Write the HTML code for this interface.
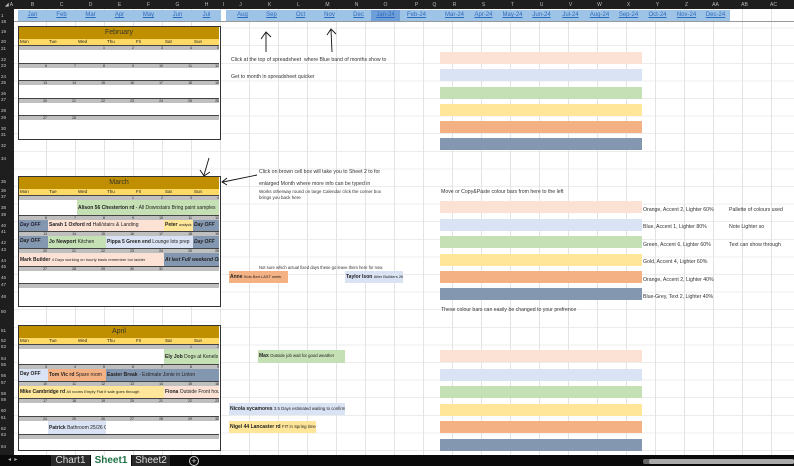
<!DOCTYPE html><html><head><meta charset="utf-8"><style>
*{margin:0;padding:0;box-sizing:border-box}
body{width:794px;height:466px;overflow:hidden;background:#fff;position:relative;font-family:"Liberation Sans",sans-serif;font-size:5px;color:#222}
.a{position:absolute;white-space:nowrap;overflow:hidden}
#grid{position:absolute;left:14px;top:9px;width:780px;height:446px;
background-image:repeating-linear-gradient(90deg,transparent 0 28px,#e3e3e3 28px 29px),repeating-linear-gradient(180deg,transparent 0 16.6px,#ececec 16.6px 17.6px);background-position:4px 0,0 2px}
.hdr{position:absolute;left:0;top:0;width:794px;height:9px;background:#1e1e1e;color:#bbb;font-size:5px}
.hdr span{position:absolute;top:2px;width:29px;text-align:center}
.rh{position:absolute;left:0;top:9px;width:14px;height:446px;background:#1e1e1e;color:#ccc;font-size:4.5px}
.rh span{position:absolute;left:1px}
.mon{position:absolute;top:10px;height:11px;background:#9dc3e6;color:#2f6bbd;font-size:6px;text-decoration:underline;text-align:center;line-height:11px}
.box{position:absolute;left:18px;width:203px;border:1.5px solid #333;background:#fff}
.t{position:absolute;left:0;width:200px;background:#bf8f00;color:#333;font-size:7px;text-align:center}
.w{position:absolute;left:0;width:200px;height:6px;background:#ffd966;font-size:4.5px}
.w span{position:absolute;width:29px;padding-left:1px}
.g{position:absolute;left:0;width:200px;height:5px;background:#bfbfbf;font-size:3.5px;border-top:1px solid #444}
.g span{position:absolute;width:28px;text-align:right}
.e{position:absolute;font-size:5px;line-height:1.2;padding:2px 1px;white-space:nowrap;overflow:hidden}
.e b{font-weight:bold}
.bar{position:absolute;left:440px;width:202px;height:12px}
.o{background:#fbe2d5}.bl{background:#dae3f3}.gr{background:#c5e0b4}.go{background:#ffe699}.o4{background:#f4b183}.bg{background:#8497b0}
.note{position:absolute;font-size:5.2px;color:#333;white-space:nowrap}
</style></head><body>
<div id="grid"></div>
<div class="hdr">
<span style="left:2px;width:14px">◢ A</span><span style="left:18px">B</span><span style="left:47px">C</span><span style="left:76px">D</span><span style="left:105px">E</span><span style="left:134px">F</span><span style="left:163px">G</span><span style="left:192px">H</span><span style="left:219px;width:9px">I</span><span style="left:226px">J</span><span style="left:255px">K</span><span style="left:284px">L</span><span style="left:313px">M</span><span style="left:342px">N</span><span style="left:371px">O</span><span style="left:402px">P</span><span style="left:430px;width:9px">Q</span><span style="left:440px">R</span><span style="left:469px">S</span><span style="left:498px">T</span><span style="left:527px">U</span><span style="left:556px">V</span><span style="left:585px">W</span><span style="left:614px">X</span><span style="left:643px">Y</span><span style="left:672px">Z</span><span style="left:701px">AA</span><span style="left:730px">AB</span><span style="left:759px">AC</span>
</div>
<div class="rh">
<span style="top:4px">1</span><span style="top:10px">18</span><span style="top:20px">19</span><span style="top:30px">20</span><span style="top:37px">21</span><span style="top:48px">22</span><span style="top:54px">23</span><span style="top:65px">24</span><span style="top:71px">25</span><span style="top:82px">26</span><span style="top:88px">27</span><span style="top:99px">28</span><span style="top:106px">29</span><span style="top:117px">30</span><span style="top:123px">31</span><span style="top:134px">32</span><span style="top:147px">34</span><span style="top:170px">35</span><span style="top:179px">36</span><span style="top:185px">37</span><span style="top:196px">38</span><span style="top:203px">39</span><span style="top:214px">40</span><span style="top:220px">41</span><span style="top:231px">42</span><span style="top:238px">43</span><span style="top:249px">44</span><span style="top:255px">45</span><span style="top:266px">46</span><span style="top:273px">47</span><span style="top:285px">48</span><span style="top:300px">50</span><span style="top:319px">51</span><span style="top:329px">52</span><span style="top:335px">53</span><span style="top:347px">54</span><span style="top:353px">55</span><span style="top:364px">56</span><span style="top:371px">57</span><span style="top:382px">58</span><span style="top:388px">59</span><span style="top:399px">60</span><span style="top:406px">61</span><span style="top:417px">62</span><span style="top:423px">63</span><span style="top:435px">64</span>
</div>
<div class="mon" style="left:18px;width:203px;background:#9dc3e6"></div>
<div class="mon" style="left:18px;width:29px">Jan</div><div class="mon" style="left:47px;width:29px">Feb</div><div class="mon" style="left:76px;width:29px">Mar</div><div class="mon" style="left:105px;width:29px">Apr</div><div class="mon" style="left:134px;width:29px">May</div><div class="mon" style="left:163px;width:29px">Jun</div><div class="mon" style="left:192px;width:29px">Jul</div>
<div class="mon" style="left:226px;width:174px"></div>
<div class="mon" style="left:228px;width:29px">Aug</div><div class="mon" style="left:257px;width:29px">Sep</div><div class="mon" style="left:286px;width:29px">Oct</div><div class="mon" style="left:315px;width:29px">Nov</div><div class="mon" style="left:344px;width:29px">Dec</div><div class="mon" style="left:371px;width:29px;background:#6f9fd8">Jan-24</div>
<div class="mon" style="left:400px;width:328px"></div>
<div class="mon" style="left:402px;width:29px">Feb-24</div><div class="mon" style="left:440px;width:29px">Mar-24</div><div class="mon" style="left:469px;width:29px">Apr-24</div><div class="mon" style="left:498px;width:29px">May-24</div><div class="mon" style="left:527px;width:29px">Jun-24</div><div class="mon" style="left:556px;width:29px">Jul-24</div><div class="mon" style="left:585px;width:29px">Aug-24</div><div class="mon" style="left:614px;width:29px">Sep-24</div><div class="mon" style="left:643px;width:29px">Oct-24</div><div class="mon" style="left:672px;width:29px">Nov-24</div><div class="mon" style="left:701px;width:29px">Dec-24</div>
<div class="a" style="left:14px;top:21px;width:780px;height:1px;background:#999"></div>

<!-- February -->
<div class="box" style="top:26px;height:114px">
<div class="t" style="top:0;height:12px;line-height:12px">February</div>
<div class="w" style="top:12px"><span style="left:0">Mon</span><span style="left:29px">Tue</span><span style="left:58px">Wed</span><span style="left:87px">Thu</span><span style="left:116px">Fri</span><span style="left:145px">Sat</span><span style="left:174px">Sun</span></div>
<div class="g" style="top:18px"><span style="left:58px">1</span><span style="left:87px">2</span><span style="left:116px">3</span><span style="left:145px">4</span><span style="left:172px">5</span></div>
<div class="g" style="top:36px"><span style="left:0">6</span><span style="left:29px">7</span><span style="left:58px">8</span><span style="left:87px">9</span><span style="left:116px">10</span><span style="left:145px">11</span><span style="left:172px">12</span></div>
<div class="g" style="top:53px"><span style="left:0">13</span><span style="left:29px">14</span><span style="left:58px">15</span><span style="left:87px">16</span><span style="left:116px">17</span><span style="left:145px">18</span><span style="left:172px">19</span></div>
<div class="g" style="top:71px"><span style="left:0">20</span><span style="left:29px">21</span><span style="left:58px">22</span><span style="left:87px">23</span><span style="left:116px">24</span><span style="left:145px">25</span><span style="left:172px">26</span></div>
<div class="g" style="top:88px"><span style="left:0">27</span><span style="left:29px">28</span></div>
</div>

<!-- March -->
<div class="box" style="top:176px;height:131px">
<div class="t" style="top:0;height:12px;line-height:12px">March</div>
<div class="w" style="top:12px"><span style="left:0">Mon</span><span style="left:29px">Tue</span><span style="left:58px">Wed</span><span style="left:87px">Thu</span><span style="left:116px">Fri</span><span style="left:145px">Sat</span><span style="left:174px">Sun</span></div>
<div class="g" style="top:18px"><span style="left:87px">1</span><span style="left:116px">2</span><span style="left:145px">3</span><span style="left:172px">4</span></div>
<div class="e gr" style="left:58px;top:23px;width:142px;height:15px;padding-top:5px"><b>Alison 56 Chesterton rd</b> - All Downstairs Bring paint samples</div>
<div class="g" style="top:38px"><span style="left:0">6</span><span style="left:29px">7</span><span style="left:58px">8</span><span style="left:87px">9</span><span style="left:116px">10</span><span style="left:145px">11</span><span style="left:172px">12</span></div>
<div class="e bg" style="left:0;top:43px;width:29px;height:11px;color:#223"><b><i>Day OFF</i></b></div>
<div class="e o" style="left:29px;top:43px;width:116px;height:11px"><b>Sarah 1 Oxford rd</b> Hall/stairs &amp; Landing</div>
<div class="e go" style="left:145px;top:43px;width:29px;height:11px"><b>Peter</b> <span style="font-size:3.5px">analysis</span></div>
<div class="e bg" style="left:174px;top:43px;width:26px;height:11px"><b><i>Day OFF</i></b></div>
<div class="g" style="top:54px"><span style="left:0">13</span><span style="left:29px">14</span><span style="left:58px">15</span><span style="left:87px">16</span><span style="left:116px">17</span><span style="left:145px">18</span><span style="left:172px">19</span></div>
<div class="e bg" style="left:0;top:59px;width:29px;height:12px"><b><i>Day OFF</i></b></div>
<div class="e gr" style="left:29px;top:59px;width:58px;height:12px;padding-top:3px"><b>Jo Newport</b> Kitchen</div>
<div class="e bl" style="left:87px;top:59px;width:87px;height:12px;padding-top:3px"><b>Pippa 5 Green end</b> Lounge lots prep</div>
<div class="e bg" style="left:174px;top:59px;width:26px;height:12px;padding-top:3px"><b><i>Day OFF</i></b></div>
<div class="g" style="top:71px"><span style="left:0">20</span><span style="left:29px">21</span><span style="left:58px">22</span><span style="left:87px">23</span><span style="left:116px">24</span><span style="left:145px">25</span><span style="left:172px">26</span></div>
<div class="e o" style="left:0;top:76px;width:145px;height:13px;padding-top:4px"><b>Mark Builder</b> <span style="font-size:4px">4 Days working on hourly basis remember Ion ladder</span></div>
<div class="e bg" style="left:145px;top:76px;width:55px;height:13px;padding-top:4px"><b><i>At last Full weekend OFF</i></b></div>
<div class="g" style="top:89px"><span style="left:0">27</span><span style="left:29px">28</span><span style="left:58px">29</span><span style="left:87px">30</span><span style="left:116px">31</span></div>
<div class="g" style="top:106px"></div>
</div>

<!-- April -->
<div class="box" style="top:325px;height:126px">
<div class="t" style="top:0;height:12px;line-height:12px">April</div>
<div class="w" style="top:12px"><span style="left:0">Mon</span><span style="left:29px">Tue</span><span style="left:58px">Wed</span><span style="left:87px">Thu</span><span style="left:116px">Fri</span><span style="left:145px">Sat</span><span style="left:174px">Sun</span></div>
<div class="g" style="top:18px"><span style="left:145px">1</span><span style="left:172px">2</span></div>
<div class="e gr" style="left:145px;top:23px;width:55px;height:15px;padding-top:5px"><b>Ely Job</b> Dogs at Kenels</div>
<div class="g" style="top:38px"><span style="left:0">3</span><span style="left:29px">4</span><span style="left:58px">5</span><span style="left:87px">6</span><span style="left:116px">7</span><span style="left:145px">8</span><span style="left:172px">9</span></div>
<div class="e bl" style="left:0;top:43px;width:29px;height:12px"><b>Day OFF</b></div>
<div class="e o4" style="left:29px;top:43px;width:58px;height:12px;padding-top:3px"><b>Tom Vic rd</b> Spare room</div>
<div class="e bg" style="left:87px;top:43px;width:113px;height:12px;padding-top:3px"><b>Easter Break</b> - Estimate Jonie in Linton</div>
<div class="g" style="top:55px"><span style="left:0">10</span><span style="left:29px">11</span><span style="left:58px">12</span><span style="left:87px">13</span><span style="left:116px">14</span><span style="left:145px">15</span><span style="left:172px">16</span></div>
<div class="e go" style="left:0;top:60px;width:145px;height:12px;padding-top:3px"><b>Mike Cambridge rd</b> <span style="font-size:4px">All rooms Empty Flat if sale goes through</span></div>
<div class="e o" style="left:145px;top:60px;width:55px;height:12px;padding-top:3px"><b>Fiona</b> Outside Front house</div>
<div class="g" style="top:72px"><span style="left:0">17</span><span style="left:29px">18</span><span style="left:58px">19</span><span style="left:87px">20</span><span style="left:116px">21</span><span style="left:145px">22</span><span style="left:172px">23</span></div>
<div class="g" style="top:90px"><span style="left:0">24</span><span style="left:29px">25</span><span style="left:58px">26</span><span style="left:87px">27</span><span style="left:116px">28</span><span style="left:145px">29</span><span style="left:172px">30</span></div>
<div class="e bl" style="left:29px;top:95px;width:58px;height:13px;padding-top:4px"><b>Patrick</b> Bathroom 25/26 ONLY</div>
<div class="g" style="top:108px"></div>
</div>

<!-- notes -->
<div class="note" style="left:231px;top:57px">Click at the top of spreadsheet &nbsp;where Blue band of months show to</div>
<div class="note" style="left:231px;top:74px">Get to month in spreadsheet quicker</div>
<div class="note" style="left:259px;top:169px">Click on brown cell box will take you to Sheet 2 to for</div>
<div class="note" style="left:259px;top:181px">enlarged Month where more info can be typed in</div>
<div class="note" style="left:259px;top:189px;font-size:4.5px;line-height:6px">Works otherway round on large Calendar click the corner box<br>brings you back here</div>
<div class="note" style="left:259px;top:265px;font-size:4.2px">Not sure which actual fixed days these go leave them here for now</div>
<div class="e o4" style="left:229px;top:271px;width:59px;height:12px;padding-top:3px"><b>Anne</b> <span style="font-size:4px">Kids Bed LAST week</span></div>
<div class="e bl" style="left:345px;top:271px;width:58px;height:12px;padding-top:3px"><b>Taylor Ison</b> <span style="font-size:4px">After Builders 2th</span></div>
<div class="e gr" style="left:258px;top:350px;width:87px;height:13px;padding-top:3px"><b>Max</b> <span style="font-size:4.3px">Outside job wait for good weather</span></div>
<div class="e bl" style="left:229px;top:403px;width:116px;height:12px;padding-top:3px"><b>Nicola sycamores</b> <span style="font-size:4.3px">3.5 Days estimated waiting to confirm</span></div>
<div class="e go" style="left:229px;top:421px;width:87px;height:12px;padding-top:3px"><b>Nigel 44 Lancaster rd</b> <span style="font-size:4.3px">FIT in Spring time</span></div>

<!-- bars -->
<div class="bar o" style="top:52px"></div><div class="bar bl" style="top:69px"></div><div class="bar gr" style="top:87px"></div><div class="bar go" style="top:104px"></div><div class="bar o4" style="top:121px"></div><div class="bar bg" style="top:138px"></div>
<div class="note" style="left:441px;top:189px">Move or Copy&amp;Paste colour bars from here to the left</div>
<div class="bar o" style="top:201px"></div><div class="bar bl" style="top:219px"></div><div class="bar gr" style="top:236px"></div><div class="bar go" style="top:254px"></div><div class="bar o4" style="top:271px"></div><div class="bar bg" style="top:288px"></div>
<div class="note" style="left:643px;top:207px">Orange, Accent 2, Lighter 60%</div>
<div class="note" style="left:643px;top:224px">Blue, Accent 1, Lighter 80%</div>
<div class="note" style="left:643px;top:242px">Green, Accent 6, Lighter 60%</div>
<div class="note" style="left:643px;top:259px">Gold, Accent 4, Lighter 60%</div>
<div class="note" style="left:643px;top:277px">Orange, Accent 2, Lighter 40%</div>
<div class="note" style="left:643px;top:294px">Blue-Grey, Text 2, Lighter 40%</div>
<div class="note" style="left:729px;top:207px">Pallette of colours used</div>
<div class="note" style="left:729px;top:224px">Note Lighter so</div>
<div class="note" style="left:729px;top:242px">Text can show through</div>
<div class="note" style="left:441px;top:307px">These colour bars can easily be changed to your prefrence</div>
<div class="bar o" style="top:350px"></div><div class="bar bl" style="top:369px"></div><div class="bar gr" style="top:386px"></div><div class="bar go" style="top:404px"></div><div class="bar o4" style="top:421px"></div><div class="bar bg" style="top:439px"></div>

<!-- arrows -->
<svg class="a" style="left:0;top:0" width="794" height="466"><g fill="none" stroke="#111" stroke-width="0.9">
<path d="M266 52 L266 33 M261 39 L266 32 L271 37"/>
<path d="M332 52 L331 30 M327 35 L331 29 L336 34"/>
<path d="M209 158 L204 175 M200 170 L204 176 L210 172"/>
<path d="M257 175 L223 182 M227 178 L222 182 L227 185"/>
</g></svg>

<!-- tab bar -->
<div class="a" style="left:0;top:455px;width:794px;height:11px;background:#0a0a0a"></div>
<div class="a" style="left:8px;top:456px;color:#aaa;font-size:6px">◂ &nbsp;▸</div>
<div class="a" style="left:51px;top:455px;width:39px;height:11px;background:#2a2a2a;color:#ddd;font-size:10px;line-height:12px;text-align:center">Chart1</div>
<div class="a" style="left:91px;top:455px;width:40px;height:11px;background:#fff;color:#1e7145;font-size:10px;line-height:12px;text-align:center;font-weight:bold">Sheet1</div>
<div class="a" style="left:132px;top:455px;width:38px;height:11px;background:#2a2a2a;color:#ddd;font-size:10px;line-height:12px;text-align:center">Sheet2</div>
<div class="a" style="left:189px;top:456px;width:10px;height:10px;border:1px solid #ccc;border-radius:50%;color:#ccc;font-size:9px;line-height:8px;text-align:center">+</div>
<div class="a" style="left:643px;top:459px;width:151px;height:5px;background:#666;border-radius:2px"></div>
<div class="a" style="left:649px;top:459px;width:145px;height:5px;background:#aaa;border-radius:2px"></div>
</body></html>
